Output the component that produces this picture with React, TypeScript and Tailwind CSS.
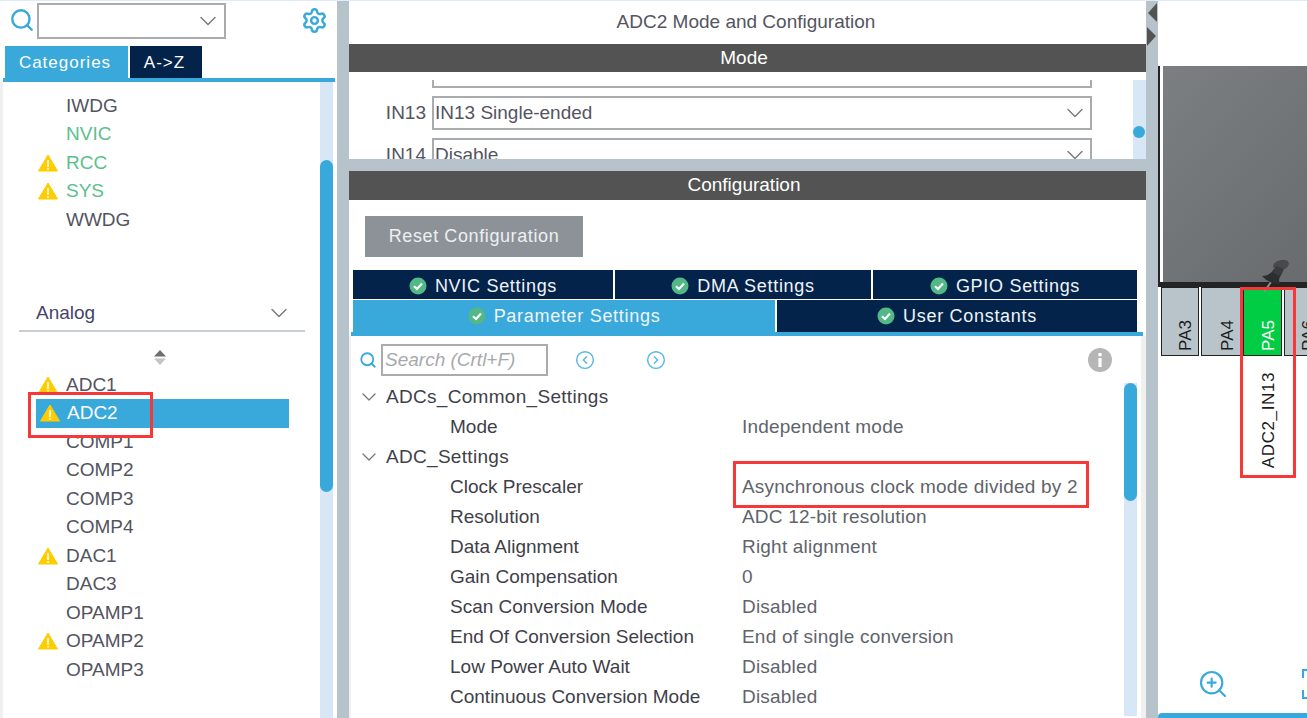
import { ChevronDown, CircleChevronLeft, CircleChevronRight, Search, Settings, ZoomIn } from "lucide-react"

const font = "font-['Liberation_Sans',Arial,sans-serif]"

function Warn({ className = "" }: { className?: string }) {
  return (
    <svg width="20" height="18" viewBox="0 0 20 18" className={className}>
      <path d="M10 1 L19.5 17 L0.5 17 Z" fill="#ffcc00" stroke="#ffcc00" strokeLinejoin="round" />
      <rect x="9.2" y="6" width="1.6" height="7" fill="#fff" />
      <rect x="9.2" y="14" width="1.6" height="1.6" fill="#fff" />
    </svg>
  )
}

function CheckDot() {
  return (
    <svg width="18" height="18" viewBox="0 0 18 18" className="shrink-0">
      <circle cx="9" cy="9" r="8.5" fill="#52b886" />
      <path d="M5 9.3 L8 12 L13 6.6" fill="none" stroke="#fff" strokeWidth="2.2" />
    </svg>
  )
}

function ListRow({ label, warn, green }: { label: string; warn?: boolean; green?: boolean }) {
  return (
    <div className="relative h-[28.5px] pl-[63px] flex items-center">
      {warn && <Warn className="absolute left-[35px] top-[5px]" />}
      <span className={green ? "text-[#5cbf8c]" : "text-[#54545f]"}>{label}</span>
    </div>
  )
}

function LeftPanel() {
  const system = [
    { label: "IWDG" },
    { label: "NVIC", green: true },
    { label: "RCC", green: true, warn: true },
    { label: "SYS", green: true, warn: true },
    { label: "WWDG" },
  ]
  const before = [{ label: "ADC1", warn: true }]
  const after = [
    { label: "COMP1" },
    { label: "COMP2" },
    { label: "COMP3" },
    { label: "COMP4" },
    { label: "DAC1", warn: true },
    { label: "DAC3" },
    { label: "OPAMP1" },
    { label: "OPAMP2", warn: true },
    { label: "OPAMP3" },
  ]

  return (
    <div className="w-[337px] shrink-0 flex flex-col overflow-hidden">
      <div className="h-[45px] shrink-0 flex items-start">
        <Search className="mt-[6px] ml-[9px] text-[#39a9dc]" size={26} strokeWidth={2.2} />
        <div className="mt-[2px] ml-[2px] w-[189px] h-[36px] border-2 border-[#a8acaf] flex items-center justify-end pr-[2px]">
          <ChevronDown className="text-[#777]" size={28} strokeWidth={1.2} />
        </div>
        <Settings className="mt-[6px] ml-[75px] text-[#39a9dc]" size={27} strokeWidth={2.2} />
      </div>
      <div className="h-[32px] shrink-0 flex pl-[5px] gap-[2px] text-white text-[17px] tracking-[1px]">
        <div className="w-[123px] bg-[#39a9dc] flex items-center justify-center pt-[1px] pr-[3px]">Categories</div>
        <div className="w-[72px] bg-[#03234b] flex items-center justify-center pt-[1px] pr-[3px]">A-&gt;Z</div>
      </div>
      <div className="h-[4px] shrink-0 ml-[3px] w-[332px] bg-[#39a9dc]" />
      <div className="flex-1 flex min-h-0">
        <div className="w-[3px] bg-[#f0f0f0]" />
        <div className="w-[317px] pt-[9.5px] text-[19px]">
          {system.map((r) => (
            <ListRow key={r.label} {...r} />
          ))}
          <div className="mt-[62.5px] ml-[16px] w-[286px] h-[35px] border-b-2 border-[#c9ced2] flex items-center justify-between pl-[17px] pr-[12px] text-[#45456a]">
            <span>Analog</span>
            <ChevronDown className="text-[#777]" size={28} strokeWidth={1.2} />
          </div>
          <div className="h-[39px] flex items-start justify-center pt-[17px] pr-[3px]">
            <svg width="12" height="17" viewBox="0 0 12 17">
              <path d="M6 1 L12 7.5 L0 7.5 Z" fill="#6e6e6e" />
              <path d="M6 16 L12 9.5 L0 9.5 Z" fill="#c4c4c4" />
            </svg>
          </div>
          {before.map((r) => (
            <ListRow key={r.label} {...r} />
          ))}
          <div className="ml-[33px] w-[253px] h-[28.5px] bg-[#39a9dc] flex items-center text-white relative pl-[31px]">
            <Warn className="absolute left-[4px] top-[5px]" />
            ADC2
          </div>
          {after.map((r) => (
            <ListRow key={r.label} {...r} />
          ))}
        </div>
        <div className="w-[13px] bg-[#d7e7f5] pt-[78px]">
          <div className="h-[332px] rounded-full bg-[#39a9dc]" />
        </div>
      </div>
    </div>
  )
}

function ModeSelect({ name, value }: { name: string; value: string }) {
  return (
    <div className="flex items-start mb-[8px]">
      <div className="w-[76px] text-right pr-[6px] leading-[34px] text-[#54545f] whitespace-nowrap">{name}</div>
      <div className="w-[660px] h-[34px] shrink-0 border-2 border-[#a8acaf] flex items-center justify-between pl-[1px] pr-[1px] text-[#54545f]">
        <span>{value}</span>
        <ChevronDown className="text-[#777]" size={28} strokeWidth={1.2} />
      </div>
    </div>
  )
}

function TabBtn({ label, active, className }: { label: string; active?: boolean; className: string }) {
  return (
    <div
      className={`${className} ${active ? "bg-[#39a9dc]" : "bg-[#03234b]"} flex items-center justify-center gap-[8px] text-[#f0f4f7]`}
    >
      <CheckDot />
      <span>{label}</span>
    </div>
  )
}

function ParamRow({ label, value }: { label: string; value: string }) {
  return (
    <div className="h-[30px] flex items-center">
      <div className="w-[391px] pl-[99px] text-[#3f3f4a] whitespace-nowrap">{label}</div>
      <div className="text-[#60646b] whitespace-nowrap tracking-[0.2px]">{value}</div>
    </div>
  )
}

function GroupRow({ label }: { label: string }) {
  return (
    <div className="h-[30px] flex items-center pl-[6px] gap-[5px] text-[#3f3f4a] tracking-[0.3px]">
      <ChevronDown className="text-[#777] shrink-0" size={24} strokeWidth={1.3} />
      <span>{label}</span>
    </div>
  )
}

function CenterPanel() {
  const params = [
    ["Clock Prescaler", "Asynchronous clock mode divided by 2"],
    ["Resolution", "ADC 12-bit resolution"],
    ["Data Alignment", "Right alignment"],
    ["Gain Compensation", "0"],
    ["Scan Conversion Mode", "Disabled"],
    ["End Of Conversion Selection", "End of single conversion"],
    ["Low Power Auto Wait", "Disabled"],
    ["Continuous Conversion Mode", "Disabled"],
  ]

  return (
    <div className="w-[797px] shrink-0 flex flex-col overflow-hidden text-[19px]">
      <div className="h-[43px] shrink-0 flex items-center justify-center pr-[3px] text-[#55555f]">ADC2 Mode and Configuration</div>
      <div className="h-[28px] shrink-0 bg-[#525352] flex items-center justify-center pr-[7px] text-white">Mode</div>
      <div className="h-[87px] shrink-0 flex overflow-hidden">
        <div className="w-[784px] pt-[8px]">
          <div className="ml-[83px] w-[660px] h-[8px] border-2 border-t-0 border-[#a8acaf]" />
          <div className="mt-[8px] ml-[7px]">
            <ModeSelect name="IN13" value="IN13 Single-ended" />
            <ModeSelect name="IN14" value="Disable" />
          </div>
        </div>
        <div className="mt-[8px] w-[13px] bg-[#d7e7f5] pt-[46px]">
          <div className="size-[12px] rounded-full bg-[#39a9dc]" />
        </div>
      </div>
      <div className="h-[12px] shrink-0 bg-[#b7c3ca]" />
      <div className="h-[29px] shrink-0 bg-[#525352] flex items-center justify-center pr-[7px] text-white">Configuration</div>
      <div className="mt-[16px] ml-[16px] w-[218px] h-[41px] shrink-0 bg-[#8c9298] flex items-center justify-center text-[18px] text-[#edf0f1] tracking-[0.6px]">
        Reset Configuration
      </div>
      <div className="mt-[13px] ml-[4px] w-[784px] shrink-0 flex flex-col gap-[1px] text-[18px] tracking-[0.7px]">
        <div className="h-[29px] flex gap-[2px]">
          <TabBtn label="NVIC Settings" className="w-[260px] pt-[3px]" />
          <TabBtn label="DMA Settings" className="w-[256px] pt-[3px]" />
          <TabBtn label="GPIO Settings" className="w-[264px] pt-[3px]" />
        </div>
        <div className="h-[32px] flex gap-[2px]">
          <TabBtn label="Parameter Settings" active className="w-[422px]" />
          <TabBtn label="User Constants" className="w-[360px]" />
        </div>
      </div>
      <div className="h-[4px] shrink-0 ml-[2px] w-[792px] bg-[#39a9dc]" />
      <div className="flex-1 flex min-h-0">
        <div className="w-[2px] bg-[#f0f0f0]" />
        <div className="w-[773px] min-w-0">
          <div className="h-[32px] mt-[8px] flex items-center relative">
            <Search className="ml-[8px] text-[#39a9dc]" size={18} strokeWidth={2.4} />
            <div className="ml-[4px] w-[167px] h-[32px] border-2 border-[#a8acaf] flex items-center pl-[2px] italic text-[#a9a9ad]">
              Search (Crtl+F)
            </div>
            <CircleChevronLeft className="ml-[27px] text-[#55b7e2]" size={20} strokeWidth={1.7} />
            <CircleChevronRight className="ml-[51px] text-[#55b7e2]" size={20} strokeWidth={1.7} />
            <svg width="24" height="24" viewBox="0 0 24 24" className="ml-[422px]">
              <circle cx="12" cy="12" r="12" fill="#b6b6b6" />
              <rect x="10.4" y="10" width="3.2" height="9" fill="#fff" />
              <rect x="10.4" y="5" width="3.2" height="3.2" fill="#fff" />
            </svg>
          </div>
          <div className="mt-[6px]">
            <GroupRow label="ADCs_Common_Settings" />
            <ParamRow label="Mode" value="Independent mode" />
            <GroupRow label="ADC_Settings" />
            {params.map(([label, value]) => (
              <ParamRow key={label} label={label} value={value} />
            ))}
          </div>
        </div>
        <div className="mt-[47px] mb-[2px] w-[13px] bg-[#d7e7f5]">
          <div className="h-[118px] rounded-full bg-[#39a9dc]" />
        </div>
        <div className="ml-[4px] w-[5px] bg-[#f0f0f0]" />
      </div>
    </div>
  )
}

function Pin({ label, active, className }: { label: string; active?: boolean; className: string }) {
  return (
    <div
      className={`${className} h-[69px] shrink-0 border border-[#222] flex items-end justify-end pb-[4px] ${active ? "bg-[#00cc44] text-white" : "bg-[#b9c4ca] text-[#1c1c1c]"}`}
    >
      <span className="[writing-mode:vertical-rl] rotate-180 whitespace-nowrap">{label}</span>
    </div>
  )
}

function RightPanel() {
  return (
    <div className="relative w-[149px] shrink-0 flex flex-col overflow-hidden text-[17px]">
      <div className="mt-[65px] h-[221px] shrink-0 w-[200px] border-l-2 border-b-[5px] border-[#222425]">
        <div className="h-full border-l-[3px] border-white bg-gradient-to-br from-[#7b7f82] to-[#65696b]" />
      </div>
      <div className="flex gap-[2px] pl-[3px]">
        <Pin label="PA3" className="w-[38px]" />
        <Pin label="PA4" className="w-[40px]" />
        <Pin label="PA5" active className="w-[39px]" />
        <Pin label="PA6" className="w-[38px]" />
      </div>
      <div className="h-[122px] pl-[98px] pt-[16px] shrink-0">
        <span className="[writing-mode:vertical-rl] rotate-180 whitespace-nowrap text-[#1c1c1c] tracking-[0.6px]">ADC2_IN13</span>
      </div>
      <div className="flex-1 flex items-start pl-[39px] pt-[190px]">
        <ZoomIn className="text-[#39a9dc] shrink-0" size={32} strokeWidth={1.6} />
      </div>
      <svg width="6" height="30" viewBox="0 0 6 30" className="absolute left-[144px] top-[668px]">
        <path d="M6 1 L1 1 L1 9 M6 29 L1 29 L1 21" fill="none" stroke="#39a9dc" strokeWidth="2" />
      </svg>
      <div className="h-[5px] shrink-0 rounded-tl-[4px] bg-[#39a9dc]" />
      <svg width="32" height="38" viewBox="0 0 32 38" className="absolute left-[100px] top-[255px]">
        <path d="M6 36 L13 26" stroke="#8a8f8f" strokeWidth="2" />
        <path d="M4 20 Q12 20 16 13 L25 15 L22 21 Q20 24 22 28 Q12 29 4 20 Z" fill="#2c2d2e" />
        <ellipse cx="23" cy="9" rx="8" ry="5" transform="rotate(-15 23 9)" fill="#48494b" />
        <path d="M18 10 L26 13 L22 20 L15 17 Z" fill="#3a3b3c" />
      </svg>
    </div>
  )
}

export default function App() {
  return (
    <div className={`relative w-[1307px] h-[718px] overflow-hidden bg-white flex flex-col ${font}`}>
      <div className="h-[1px] shrink-0 bg-[#dcecf8]" />
      <div className="flex-1 flex min-h-0">
        <LeftPanel />
        <div className="w-[12px] shrink-0 bg-[#b7c3ca]" />
        <CenterPanel />
        <div className="relative w-[12px] shrink-0 bg-[#b7c3ca]">
          <svg width="12" height="48" viewBox="0 0 12 48" className="absolute left-0 top-0">
            <path d="M11 2 L2 12 L11 21 Z" fill="#525352" />
            <path d="M1 26 L10 35 L1 45 Z" fill="#525352" />
          </svg>
        </div>
        <RightPanel />
      </div>
      {/* red annotation boxes drawn over the screenshot */}
      <div className="absolute left-[28px] top-[392px] w-[125px] h-[46px] border-[3px] border-[#f73838]" />
      <div className="absolute left-[733px] top-[461px] w-[356px] h-[47px] border-[3px] border-[#f73838]" />
      <div className="absolute left-[1240px] top-[287px] w-[56px] h-[191px] border-[3px] border-[#f73838]" />
    </div>
  )
}
